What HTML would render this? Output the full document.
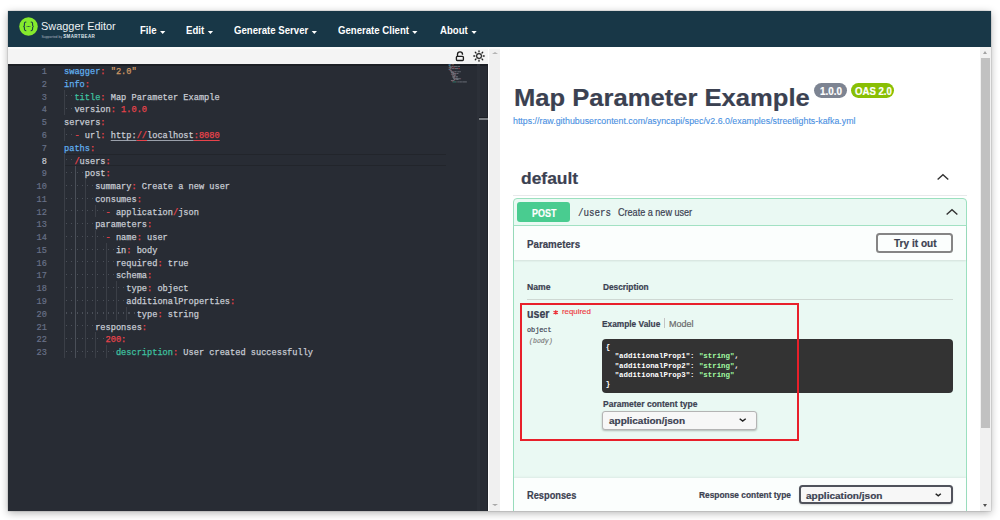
<!DOCTYPE html>
<html><head><meta charset="utf-8">
<style>
*{margin:0;padding:0;box-sizing:border-box}
html,body{width:1000px;height:520px;overflow:hidden;background:#fff;font-family:"Liberation Sans",sans-serif}
.abs{position:absolute}
#win{position:absolute;left:8px;top:11px;width:983px;height:500px;background:#fff;box-shadow:0 0 1px rgba(0,0,0,.45),0 2px 8px rgba(0,0,0,.3);overflow:hidden}
.pg{position:absolute;left:-8px;top:-11px;width:1000px;height:520px}
#hdr{position:absolute;left:0;top:0;width:983px;height:36px;background:#183747}
.menu{position:absolute;top:13px;color:#fff;font-weight:bold;font-size:11px;line-height:12px;white-space:nowrap;transform:scaleX(.873);transform-origin:0 0}
.menu i{display:inline-block;width:0;height:0;border-left:3.1px solid transparent;border-right:3.1px solid transparent;border-top:3.9px solid #fff;margin-left:4px;vertical-align:0.3px}
#tb{position:absolute;left:0;top:36px;width:492px;height:18px;background:#f4f4f4;border-top:2px solid #fafafa}
#ed{position:absolute;left:0;top:53px;width:480px;height:447px;background:#282c34;overflow:hidden}
#vstrip{position:absolute;left:480px;top:38px;width:12.6px;height:462px;background:#f0f0f0;border-left:1.5px solid #fdfdfd}
#right{position:absolute;left:492px;top:36px;width:480px;height:464px;background:#fff;overflow:hidden}
#sb{position:absolute;left:972px;top:36px;width:11px;height:464px;background:#f1f1f1}
.code{position:absolute;left:56.4px;top:2.2px;-webkit-text-stroke:0.25px currentColor;transform:scaleX(0.916);transform-origin:0 0;font-family:"Liberation Mono",monospace;font-size:9.45px;line-height:12.77px;white-space:pre;color:#c8ccd4}
.ln{position:absolute;left:0;top:2.2px;-webkit-text-stroke:0.2px currentColor;width:38.8px;text-align:right;transform:scaleX(0.876);transform-origin:100% 0;font-family:"Liberation Mono",monospace;font-size:9.8px;line-height:12.77px;color:#687188}
.ln span{display:block}
.ln .cur{color:#c8ccd4}
.dot{width:1.1px;height:1.1px;background:#4a4f58}
.k{color:#61afef}.t{color:#3fc1a0}.r{color:#e8434b}.o{color:#d19a66}.w{color:#c8ccd4}
.u{text-decoration:underline;text-underline-offset:2px;text-decoration-thickness:1px}.w.u{text-decoration-color:#9aa0aa}
.tx{position:absolute;white-space:nowrap;line-height:1;color:#3b4151;-webkit-text-stroke:.2px currentColor}
.b{font-weight:bold}
.mono{font-family:"Liberation Mono",monospace}
.chev{position:absolute}
</style></head><body>
<div id="win">
  <div id="hdr">
    <svg class="abs" style="left:10.5px;top:6px" width="19" height="19" viewBox="0 0 19 19"><circle cx="9.5" cy="9.5" r="9.3" fill="#85ea2d"/><g fill="none" stroke="#173647" stroke-width="1.05" stroke-linecap="round"><path d="M6.9 5C5.6 5 5.4 5.6 5.4 6.6V8.3C5.4 9 5 9.4 4.3 9.4C5 9.4 5.4 9.8 5.4 10.5V12.1C5.4 13.1 5.6 13.7 6.9 13.7"/><path d="M12.1 5C13.4 5 13.6 5.6 13.6 6.6V8.3C13.6 9 14 9.4 14.7 9.4C14 9.4 13.6 9.8 13.6 10.5V12.1C13.6 13.1 13.4 13.7 12.1 13.7"/></g><g fill="#173647"><circle cx="8.1" cy="9.4" r=".5"/><circle cx="9.5" cy="9.4" r=".5"/><circle cx="10.9" cy="9.4" r=".5"/></g></svg>
    <div class="pg"><div class="tx" style="left:41.40px;top:21.14px;font-size:11.172px;transform:scaleX(0.9792);transform-origin:0 0;color:#eef2f5;-webkit-text-stroke:0">Swagger Editor</div></div>
    <div class="abs" style="left:33.4px;top:22.8px;color:#aab6c0;font-size:3.5px;white-space:nowrap">Supported by <b style="font-size:4.5px;letter-spacing:0.35px;color:#dfe5ea">SMARTBEAR</b></div>
    <div class="menu" style="left:132px">File<i></i></div>
    <div class="menu" style="left:178px">Edit<i></i></div>
    <div class="menu" style="left:225.6px">Generate Server<i></i></div>
    <div class="menu" style="left:330.4px">Generate Client<i></i></div>
    <div class="menu" style="left:432.4px">About<i></i></div>
  </div>
  <div id="tb">
    <svg class="abs" style="left:447px;top:2px" width="11" height="12" viewBox="0 0 11 12"><path d="M2.5 5.4V3.3A2.5 2.5 0 0 1 7.5 3.3V3.8" fill="none" stroke="#1d1d1d" stroke-width="1.35"/><rect x="1.4" y="5.4" width="7" height="4.1" rx=".9" fill="none" stroke="#1d1d1d" stroke-width="1.35"/></svg>
    <svg class="abs" style="left:464.7px;top:1.3px" width="12" height="12" viewBox="0 0 12 12"><circle cx="6" cy="6" r="2.4" fill="none" stroke="#222" stroke-width="1.2"/><g stroke="#222" stroke-width="1.3" stroke-linecap="round"><path d="M6 .8v1M6 10.2v1M.8 6h1M10.2 6h1M2.3 2.3l.7.7M9 9l.7.7M9.7 2.3L9 3M3 9l-.7.7"/></g></svg>
  </div>
  <div id="ed">
    <div class="abs" style="left:56px;top:89.6px;width:381.5px;height:12.6px;border-top:1px solid #22252b;border-bottom:1px solid #22252b"></div>
    <div class="abs" style="left:56.20px;top:25.74px;width:1px;height:25.54px;background:#3b3f47"></div><div class="abs" style="left:56.20px;top:64.05px;width:1px;height:12.77px;background:#3b3f47"></div><div class="abs" style="left:56.20px;top:89.59px;width:1px;height:204.32px;background:#3b3f47"></div><div class="abs" style="left:66.58px;top:102.36px;width:1.6px;height:191.55px;background:#4a4f58"></div><div class="abs" style="left:76.96px;top:115.13px;width:1px;height:178.78px;background:#3b3f47"></div><div class="abs" style="left:87.34px;top:140.67px;width:1px;height:12.77px;background:#3b3f47"></div><div class="abs" style="left:87.34px;top:166.21px;width:1px;height:89.39px;background:#3b3f47"></div><div class="abs" style="left:87.34px;top:268.37px;width:1px;height:25.54px;background:#3b3f47"></div><div class="abs" style="left:97.72px;top:178.98px;width:1px;height:76.62px;background:#3b3f47"></div><div class="abs" style="left:97.72px;top:281.14px;width:1px;height:12.77px;background:#3b3f47"></div><div class="abs" style="left:108.10px;top:217.29px;width:1px;height:38.31px;background:#3b3f47"></div><div class="abs" style="left:118.48px;top:242.83px;width:1px;height:12.77px;background:#3b3f47"></div>
    <div class="abs dot" style="left:58.20px;top:31.34px"></div><div class="abs dot" style="left:63.39px;top:31.34px"></div><div class="abs dot" style="left:58.20px;top:44.11px"></div><div class="abs dot" style="left:63.39px;top:44.11px"></div><div class="abs dot" style="left:58.20px;top:69.65px"></div><div class="abs dot" style="left:63.39px;top:69.65px"></div><div class="abs dot" style="left:58.20px;top:95.19px"></div><div class="abs dot" style="left:63.39px;top:95.19px"></div><div class="abs dot" style="left:58.20px;top:107.96px"></div><div class="abs dot" style="left:63.39px;top:107.96px"></div><div class="abs dot" style="left:68.58px;top:107.96px"></div><div class="abs dot" style="left:73.77px;top:107.96px"></div><div class="abs dot" style="left:58.20px;top:120.73px"></div><div class="abs dot" style="left:63.39px;top:120.73px"></div><div class="abs dot" style="left:68.58px;top:120.73px"></div><div class="abs dot" style="left:73.77px;top:120.73px"></div><div class="abs dot" style="left:78.95px;top:120.73px"></div><div class="abs dot" style="left:84.14px;top:120.73px"></div><div class="abs dot" style="left:58.20px;top:133.50px"></div><div class="abs dot" style="left:63.39px;top:133.50px"></div><div class="abs dot" style="left:68.58px;top:133.50px"></div><div class="abs dot" style="left:73.77px;top:133.50px"></div><div class="abs dot" style="left:78.95px;top:133.50px"></div><div class="abs dot" style="left:84.14px;top:133.50px"></div><div class="abs dot" style="left:58.20px;top:146.27px"></div><div class="abs dot" style="left:63.39px;top:146.27px"></div><div class="abs dot" style="left:68.58px;top:146.27px"></div><div class="abs dot" style="left:73.77px;top:146.27px"></div><div class="abs dot" style="left:78.95px;top:146.27px"></div><div class="abs dot" style="left:84.14px;top:146.27px"></div><div class="abs dot" style="left:89.33px;top:146.27px"></div><div class="abs dot" style="left:94.53px;top:146.27px"></div><div class="abs dot" style="left:58.20px;top:159.04px"></div><div class="abs dot" style="left:63.39px;top:159.04px"></div><div class="abs dot" style="left:68.58px;top:159.04px"></div><div class="abs dot" style="left:73.77px;top:159.04px"></div><div class="abs dot" style="left:78.95px;top:159.04px"></div><div class="abs dot" style="left:84.14px;top:159.04px"></div><div class="abs dot" style="left:58.20px;top:171.81px"></div><div class="abs dot" style="left:63.39px;top:171.81px"></div><div class="abs dot" style="left:68.58px;top:171.81px"></div><div class="abs dot" style="left:73.77px;top:171.81px"></div><div class="abs dot" style="left:78.95px;top:171.81px"></div><div class="abs dot" style="left:84.14px;top:171.81px"></div><div class="abs dot" style="left:89.33px;top:171.81px"></div><div class="abs dot" style="left:94.53px;top:171.81px"></div><div class="abs dot" style="left:58.20px;top:184.58px"></div><div class="abs dot" style="left:63.39px;top:184.58px"></div><div class="abs dot" style="left:68.58px;top:184.58px"></div><div class="abs dot" style="left:73.77px;top:184.58px"></div><div class="abs dot" style="left:78.95px;top:184.58px"></div><div class="abs dot" style="left:84.14px;top:184.58px"></div><div class="abs dot" style="left:89.33px;top:184.58px"></div><div class="abs dot" style="left:94.53px;top:184.58px"></div><div class="abs dot" style="left:99.72px;top:184.58px"></div><div class="abs dot" style="left:104.91px;top:184.58px"></div><div class="abs dot" style="left:58.20px;top:197.35px"></div><div class="abs dot" style="left:63.39px;top:197.35px"></div><div class="abs dot" style="left:68.58px;top:197.35px"></div><div class="abs dot" style="left:73.77px;top:197.35px"></div><div class="abs dot" style="left:78.95px;top:197.35px"></div><div class="abs dot" style="left:84.14px;top:197.35px"></div><div class="abs dot" style="left:89.33px;top:197.35px"></div><div class="abs dot" style="left:94.53px;top:197.35px"></div><div class="abs dot" style="left:99.72px;top:197.35px"></div><div class="abs dot" style="left:104.91px;top:197.35px"></div><div class="abs dot" style="left:58.20px;top:210.12px"></div><div class="abs dot" style="left:63.39px;top:210.12px"></div><div class="abs dot" style="left:68.58px;top:210.12px"></div><div class="abs dot" style="left:73.77px;top:210.12px"></div><div class="abs dot" style="left:78.95px;top:210.12px"></div><div class="abs dot" style="left:84.14px;top:210.12px"></div><div class="abs dot" style="left:89.33px;top:210.12px"></div><div class="abs dot" style="left:94.53px;top:210.12px"></div><div class="abs dot" style="left:99.72px;top:210.12px"></div><div class="abs dot" style="left:104.91px;top:210.12px"></div><div class="abs dot" style="left:58.20px;top:222.89px"></div><div class="abs dot" style="left:63.39px;top:222.89px"></div><div class="abs dot" style="left:68.58px;top:222.89px"></div><div class="abs dot" style="left:73.77px;top:222.89px"></div><div class="abs dot" style="left:78.95px;top:222.89px"></div><div class="abs dot" style="left:84.14px;top:222.89px"></div><div class="abs dot" style="left:89.33px;top:222.89px"></div><div class="abs dot" style="left:94.53px;top:222.89px"></div><div class="abs dot" style="left:99.72px;top:222.89px"></div><div class="abs dot" style="left:104.91px;top:222.89px"></div><div class="abs dot" style="left:110.10px;top:222.89px"></div><div class="abs dot" style="left:115.29px;top:222.89px"></div><div class="abs dot" style="left:58.20px;top:235.66px"></div><div class="abs dot" style="left:63.39px;top:235.66px"></div><div class="abs dot" style="left:68.58px;top:235.66px"></div><div class="abs dot" style="left:73.77px;top:235.66px"></div><div class="abs dot" style="left:78.95px;top:235.66px"></div><div class="abs dot" style="left:84.14px;top:235.66px"></div><div class="abs dot" style="left:89.33px;top:235.66px"></div><div class="abs dot" style="left:94.53px;top:235.66px"></div><div class="abs dot" style="left:99.72px;top:235.66px"></div><div class="abs dot" style="left:104.91px;top:235.66px"></div><div class="abs dot" style="left:110.10px;top:235.66px"></div><div class="abs dot" style="left:115.29px;top:235.66px"></div><div class="abs dot" style="left:58.20px;top:248.43px"></div><div class="abs dot" style="left:63.39px;top:248.43px"></div><div class="abs dot" style="left:68.58px;top:248.43px"></div><div class="abs dot" style="left:73.77px;top:248.43px"></div><div class="abs dot" style="left:78.95px;top:248.43px"></div><div class="abs dot" style="left:84.14px;top:248.43px"></div><div class="abs dot" style="left:89.33px;top:248.43px"></div><div class="abs dot" style="left:94.53px;top:248.43px"></div><div class="abs dot" style="left:99.72px;top:248.43px"></div><div class="abs dot" style="left:104.91px;top:248.43px"></div><div class="abs dot" style="left:110.10px;top:248.43px"></div><div class="abs dot" style="left:115.29px;top:248.43px"></div><div class="abs dot" style="left:120.48px;top:248.43px"></div><div class="abs dot" style="left:125.67px;top:248.43px"></div><div class="abs dot" style="left:58.20px;top:261.20px"></div><div class="abs dot" style="left:63.39px;top:261.20px"></div><div class="abs dot" style="left:68.58px;top:261.20px"></div><div class="abs dot" style="left:73.77px;top:261.20px"></div><div class="abs dot" style="left:78.95px;top:261.20px"></div><div class="abs dot" style="left:84.14px;top:261.20px"></div><div class="abs dot" style="left:58.20px;top:273.97px"></div><div class="abs dot" style="left:63.39px;top:273.97px"></div><div class="abs dot" style="left:68.58px;top:273.97px"></div><div class="abs dot" style="left:73.77px;top:273.97px"></div><div class="abs dot" style="left:78.95px;top:273.97px"></div><div class="abs dot" style="left:84.14px;top:273.97px"></div><div class="abs dot" style="left:89.33px;top:273.97px"></div><div class="abs dot" style="left:94.53px;top:273.97px"></div><div class="abs dot" style="left:58.20px;top:286.74px"></div><div class="abs dot" style="left:63.39px;top:286.74px"></div><div class="abs dot" style="left:68.58px;top:286.74px"></div><div class="abs dot" style="left:73.77px;top:286.74px"></div><div class="abs dot" style="left:78.95px;top:286.74px"></div><div class="abs dot" style="left:84.14px;top:286.74px"></div><div class="abs dot" style="left:89.33px;top:286.74px"></div><div class="abs dot" style="left:94.53px;top:286.74px"></div><div class="abs dot" style="left:99.72px;top:286.74px"></div><div class="abs dot" style="left:104.91px;top:286.74px"></div>
    <div class="abs" style="left:0;top:0;width:480px;height:1.6px;background:#1c1f25"></div>
    <div class="abs" style="left:468.9px;top:0;width:3.5px;height:447px;background:#2c3038"></div>
    <div class="abs" style="left:479px;top:0;width:1px;height:447px;background:#20232a"></div>
    <svg class="abs" style="left:0;top:0;opacity:.65" width="480" height="40"><rect x="440.60" y="0.40" width="2.66" height="0.75" fill="#61afef"/><rect x="443.26" y="0.40" width="0.38" height="0.75" fill="#e8434b"/><rect x="444.02" y="0.40" width="1.90" height="0.75" fill="#d19a66"/><rect x="440.60" y="1.18" width="1.52" height="0.75" fill="#61afef"/><rect x="442.12" y="1.18" width="0.38" height="0.75" fill="#e8434b"/><rect x="441.36" y="1.96" width="1.90" height="0.75" fill="#3fc1a0"/><rect x="443.26" y="1.96" width="0.38" height="0.75" fill="#e8434b"/><rect x="444.02" y="1.96" width="1.14" height="0.75" fill="#aab0ba"/><rect x="445.54" y="1.96" width="3.42" height="0.75" fill="#aab0ba"/><rect x="449.34" y="1.96" width="2.66" height="0.75" fill="#aab0ba"/><rect x="441.36" y="2.74" width="2.66" height="0.75" fill="#aab0ba"/><rect x="444.02" y="2.74" width="0.38" height="0.75" fill="#e8434b"/><rect x="444.78" y="2.74" width="1.90" height="0.75" fill="#e8434b"/><rect x="440.60" y="3.52" width="2.66" height="0.75" fill="#aab0ba"/><rect x="443.26" y="3.52" width="0.38" height="0.75" fill="#e8434b"/><rect x="441.36" y="4.30" width="0.38" height="0.75" fill="#e8434b"/><rect x="442.12" y="4.30" width="1.14" height="0.75" fill="#aab0ba"/><rect x="443.26" y="4.30" width="0.38" height="0.75" fill="#e8434b"/><rect x="444.02" y="4.30" width="1.90" height="0.75" fill="#aab0ba"/><rect x="445.92" y="4.30" width="0.76" height="0.75" fill="#e8434b"/><rect x="446.68" y="4.30" width="3.42" height="0.75" fill="#aab0ba"/><rect x="450.10" y="4.30" width="1.90" height="0.75" fill="#e8434b"/><rect x="440.60" y="5.08" width="1.90" height="0.75" fill="#61afef"/><rect x="442.50" y="5.08" width="0.38" height="0.75" fill="#e8434b"/><rect x="441.36" y="5.86" width="0.38" height="0.75" fill="#e8434b"/><rect x="441.74" y="5.86" width="1.90" height="0.75" fill="#aab0ba"/><rect x="443.64" y="5.86" width="0.38" height="0.75" fill="#e8434b"/><rect x="442.12" y="6.64" width="1.52" height="0.75" fill="#aab0ba"/><rect x="443.64" y="6.64" width="0.38" height="0.75" fill="#e8434b"/><rect x="442.88" y="7.42" width="2.66" height="0.75" fill="#aab0ba"/><rect x="445.54" y="7.42" width="0.38" height="0.75" fill="#e8434b"/><rect x="446.30" y="7.42" width="2.28" height="0.75" fill="#aab0ba"/><rect x="448.96" y="7.42" width="0.38" height="0.75" fill="#aab0ba"/><rect x="449.72" y="7.42" width="1.14" height="0.75" fill="#aab0ba"/><rect x="451.24" y="7.42" width="1.52" height="0.75" fill="#aab0ba"/><rect x="442.88" y="8.20" width="3.04" height="0.75" fill="#aab0ba"/><rect x="445.92" y="8.20" width="0.38" height="0.75" fill="#e8434b"/><rect x="443.64" y="8.98" width="0.38" height="0.75" fill="#e8434b"/><rect x="444.40" y="8.98" width="4.18" height="0.75" fill="#aab0ba"/><rect x="448.58" y="8.98" width="0.38" height="0.75" fill="#e8434b"/><rect x="448.96" y="8.98" width="1.52" height="0.75" fill="#aab0ba"/><rect x="442.88" y="9.76" width="3.80" height="0.75" fill="#aab0ba"/><rect x="446.68" y="9.76" width="0.38" height="0.75" fill="#e8434b"/><rect x="443.64" y="10.54" width="0.38" height="0.75" fill="#e8434b"/><rect x="444.40" y="10.54" width="1.52" height="0.75" fill="#aab0ba"/><rect x="445.92" y="10.54" width="0.38" height="0.75" fill="#e8434b"/><rect x="446.68" y="10.54" width="1.52" height="0.75" fill="#aab0ba"/><rect x="444.40" y="11.32" width="0.76" height="0.75" fill="#aab0ba"/><rect x="445.16" y="11.32" width="0.38" height="0.75" fill="#e8434b"/><rect x="445.92" y="11.32" width="1.52" height="0.75" fill="#aab0ba"/><rect x="444.40" y="12.10" width="3.04" height="0.75" fill="#aab0ba"/><rect x="447.44" y="12.10" width="0.38" height="0.75" fill="#e8434b"/><rect x="448.20" y="12.10" width="1.52" height="0.75" fill="#aab0ba"/><rect x="444.40" y="12.88" width="2.28" height="0.75" fill="#aab0ba"/><rect x="446.68" y="12.88" width="0.38" height="0.75" fill="#e8434b"/><rect x="445.16" y="13.66" width="1.52" height="0.75" fill="#aab0ba"/><rect x="446.68" y="13.66" width="0.38" height="0.75" fill="#e8434b"/><rect x="447.44" y="13.66" width="2.28" height="0.75" fill="#aab0ba"/><rect x="445.16" y="14.44" width="7.60" height="0.75" fill="#aab0ba"/><rect x="452.76" y="14.44" width="0.38" height="0.75" fill="#e8434b"/><rect x="445.92" y="15.22" width="1.52" height="0.75" fill="#aab0ba"/><rect x="447.44" y="15.22" width="0.38" height="0.75" fill="#e8434b"/><rect x="448.20" y="15.22" width="2.28" height="0.75" fill="#aab0ba"/><rect x="442.88" y="16.00" width="3.42" height="0.75" fill="#aab0ba"/><rect x="446.30" y="16.00" width="0.38" height="0.75" fill="#e8434b"/><rect x="443.64" y="16.78" width="1.14" height="0.75" fill="#e8434b"/><rect x="444.78" y="16.78" width="0.38" height="0.75" fill="#e8434b"/><rect x="444.40" y="17.56" width="4.18" height="0.75" fill="#3fc1a0"/><rect x="448.58" y="17.56" width="0.38" height="0.75" fill="#e8434b"/><rect x="449.34" y="17.56" width="1.52" height="0.75" fill="#aab0ba"/><rect x="451.24" y="17.56" width="2.66" height="0.75" fill="#aab0ba"/><rect x="454.28" y="17.56" width="4.56" height="0.75" fill="#aab0ba"/></svg>
    <div class="abs" style="left:470.9px;top:53px;width:9px;height:1px;background:#1c1f25"></div>
    <div class="abs" style="left:470.9px;top:54px;width:9px;height:2.3px;background:#7b7f84"></div>
    <div class="ln"><span>1</span><span>2</span><span>3</span><span>4</span><span>5</span><span>6</span><span>7</span><span class=cur>8</span><span>9</span><span>10</span><span>11</span><span>12</span><span>13</span><span>14</span><span>15</span><span>16</span><span>17</span><span>18</span><span>19</span><span>20</span><span>21</span><span>22</span><span>23</span></div>
    <div class="code"><span class="k">swagger</span><span class="r">:</span><span class="w"> </span><span class="o">&quot;2.0&quot;</span>
<span class="k">info</span><span class="r">:</span>
  <span class="t">title</span><span class="r">:</span><span class="w"> Map Parameter Example</span>
  <span class="w">version</span><span class="r">:</span><span class="w"> </span><span class="r">1.0.0</span>
<span class="w">servers</span><span class="r">:</span>
  <span class="r">-</span><span class="w"> url</span><span class="r">:</span><span class="w"> </span><span class="w u">http:</span><span class="r u">//</span><span class="w u">localhost</span><span class="r u">:8080</span>
<span class="k">paths</span><span class="r">:</span>
  <span class="r">/</span><span class="w">users</span><span class="r">:</span>
    <span class="w">post</span><span class="r">:</span>
      <span class="w">summary</span><span class="r">:</span><span class="w"> Create a new user</span>
      <span class="w">consumes</span><span class="r">:</span>
        <span class="r">-</span><span class="w"> application</span><span class="r">/</span><span class="w">json</span>
      <span class="w">parameters</span><span class="r">:</span>
        <span class="r">-</span><span class="w"> name</span><span class="r">:</span><span class="w"> user</span>
          <span class="w">in</span><span class="r">:</span><span class="w"> body</span>
          <span class="w">required</span><span class="r">:</span><span class="w"> true</span>
          <span class="w">schema</span><span class="r">:</span>
            <span class="w">type</span><span class="r">:</span><span class="w"> object</span>
            <span class="w">additionalProperties</span><span class="r">:</span>
              <span class="w">type</span><span class="r">:</span><span class="w"> string</span>
      <span class="w">responses</span><span class="r">:</span>
        <span class="r">200</span><span class="r">:</span>
          <span class="t">description</span><span class="r">:</span><span class="w"> User created successfully</span></div>
  </div>
  <div id="vstrip">
    <div class="abs" style="left:2.8px;top:2.6px;width:0;height:0;border-left:3px solid transparent;border-right:3px solid transparent;border-bottom:2.6px solid #b4b4b4"></div>
    <div class="abs" style="left:2.8px;top:455px;width:0;height:0;border-left:3px solid transparent;border-right:3px solid transparent;border-top:2.6px solid #a8a8a8"></div>
  </div>
  <div id="right"></div>
  <div class="pg">
<div class="tx" style="left:513.80px;top:85.60px;font-size:24.690px;transform:scaleX(1.0363);transform-origin:0 0;font-weight:bold;color:#3b4151;">Map Parameter Example</div>
<div class="abs" style="left:814.40px;top:83.20px;width:33.10px;height:14.80px;border-radius:7.4px;background:#7d8492"></div>
<div class="tx" style="left:820.40px;top:86.22px;font-size:10.602px;transform:scaleX(0.9331);transform-origin:0 0;font-weight:bold;color:#fff;">1.0.0</div>
<div class="abs" style="left:851.20px;top:83.20px;width:42.70px;height:14.80px;border-radius:7.4px;background:#89bf04"></div>
<div class="tx" style="left:854.60px;top:86.22px;font-size:10.602px;transform:scaleX(0.9076);transform-origin:0 0;font-weight:bold;color:#fff;">OAS 2.0</div>
<div class="tx" style="left:512.80px;top:116.74px;font-size:8.690px;transform:scaleX(1.0180);transform-origin:0 0;color:#4990e2;-webkit-text-stroke:.1px currentColor;">https://raw.githubusercontent.com/asyncapi/spec/v2.6.0/examples/streetlights-kafka.yml</div>
<div class="tx" style="left:520.50px;top:169.88px;font-size:17.379px;transform:scaleX(1.0040);transform-origin:0 0;font-weight:bold;color:#3b4151;">default</div>
<svg class="abs" style="left:934.70px;top:172.00px" width="15.90" height="10.20"><path d="M2.63 7.50L7.95 2.77L13.27 7.50" fill="none" stroke="#333" stroke-width="1.4"/></svg>
<div class="abs" style="left:513.40px;top:195.00px;width:453.30px;height:1.00px;background:#e8e9eb"></div>
<div class="abs" style="left:513.40px;top:198.10px;width:453.30px;height:341.90px;border:1px solid #9be0bf;border-radius:4px;background:#eaf9f3"></div>
<div class="abs" style="left:514.40px;top:225.20px;width:451.30px;height:1.00px;background:#a3e2c4"></div>
<div class="abs" style="left:517.10px;top:202.40px;width:53.20px;height:19.80px;border-radius:3px;background:#49cc90"></div>
<div class="tx" style="left:531.50px;top:207.80px;font-size:10.745px;transform:scaleX(0.8339);transform-origin:0 0;font-weight:bold;color:#fff;">POST</div>
<div class="tx" style="left:577.70px;top:209.49px;font-size:10.069px;transform:scaleX(0.9129);transform-origin:0 0;font-family:'Liberation Mono',monospace;color:#3b4151;">/users</div>
<div class="tx" style="left:617.70px;top:208.09px;font-size:10.172px;transform:scaleX(0.8927);transform-origin:0 0;color:#3b4151;">Create a new user</div>
<svg class="abs" style="left:944.30px;top:206.60px" width="16.00" height="10.20"><path d="M2.63 7.50L8.00 2.77L13.37 7.50" fill="none" stroke="#333" stroke-width="1.4"/></svg>
<div class="abs" style="left:514.40px;top:226.00px;width:451.30px;height:34.00px;background:rgba(255,255,255,.8);box-shadow:0 1px 2px rgba(0,0,0,.1)"></div>
<div class="tx" style="left:527.30px;top:238.89px;font-size:10.756px;transform:scaleX(0.9062);transform-origin:0 0;font-weight:bold;color:#3b4151;">Parameters</div>
<div class="abs" style="left:876.00px;top:233.00px;width:77.00px;height:20.00px;border:2px solid #858585;border-radius:3.5px"></div>
<div class="tx" style="left:893.60px;top:238.72px;font-size:10.483px;transform:scaleX(0.9625);transform-origin:0 0;font-weight:bold;color:#3b4151;">Try it out</div>
<div class="tx" style="left:527.30px;top:283.04px;font-size:8.576px;transform:scaleX(1.0060);transform-origin:0 0;font-weight:bold;color:#3b4151;">Name</div>
<div class="tx" style="left:602.50px;top:282.93px;font-size:8.828px;transform:scaleX(0.9411);transform-origin:0 0;font-weight:bold;color:#3b4151;">Description</div>
<div class="abs" style="left:527.00px;top:299.20px;width:425.70px;height:1.00px;background:#cfd8d3"></div>
<div class="tx" style="left:527.10px;top:308.65px;font-size:11.874px;transform:scaleX(0.8972);transform-origin:0 0;font-weight:bold;color:#3b4151;">user</div>
<svg class="abs" style="left:553.2px;top:310.2px" width="5.4" height="4.8" viewBox="0 0 5.4 4.8"><g stroke="#ec2f36" stroke-width="1.25"><path d="M2.7 .2V4.6M.5 1.2L4.9 3.6M.5 3.6L4.9 1.2"/></g></svg>
<div class="tx" style="left:561.70px;top:308.43px;font-size:8.000px;transform:scaleX(0.9812);transform-origin:0 0;color:#ee3a40;-webkit-text-stroke:.15px #ee3a40;">required</div>
<div class="tx" style="left:527.10px;top:327.01px;font-size:7.172px;transform:scaleX(0.9525);transform-origin:0 0;font-family:'Liberation Mono',monospace;color:#3b4151;">object</div>
<div class="tx" style="left:528.80px;top:338.00px;font-size:7.395px;transform:scaleX(0.8899);transform-origin:0 0;font-style:italic;font-family:'Liberation Mono',monospace;color:#808080;">(body)</div>
<div class="tx" style="left:602.40px;top:319.53px;font-size:8.828px;transform:scaleX(0.9445);transform-origin:0 0;font-weight:bold;color:#3b4151;">Example Value</div>
<div class="abs" style="left:664.20px;top:318.20px;width:1.00px;height:9.60px;background:#c4c4c4"></div>
<div class="tx" style="left:668.80px;top:319.53px;font-size:8.828px;transform:scaleX(1.0230);transform-origin:0 0;color:#6b6b6b;">Model</div>
<div class="abs" style="left:602.20px;top:339.00px;width:350.40px;height:54.00px;border-radius:4px;background:#333"></div>
<div class="tx mono b" style="left:605.8px;top:343.2px;font-size:7.4px;line-height:9.25px;color:#fff;white-space:pre;-webkit-text-stroke:0">{
  "additionalProp1": <span style="color:#a2fca2">"string"</span>,
  "additionalProp2": <span style="color:#a2fca2">"string"</span>,
  "additionalProp3": <span style="color:#a2fca2">"string"</span>
}</div>
<div class="tx" style="left:602.70px;top:399.28px;font-size:9.593px;transform:scaleX(0.8872);transform-origin:0 0;font-weight:bold;color:#3b4151;">Parameter content type</div>
<div class="abs" style="left:602.00px;top:411.00px;width:154.70px;height:19.00px;border:1px solid #b4b4b4;border-radius:3px;background:#f7f7f7;box-shadow:0 1px 2px rgba(0,0,0,.25)"></div>
<div class="tx" style="left:609.30px;top:415.79px;font-size:9.931px;transform:scaleX(1.0067);transform-origin:0 0;font-weight:bold;color:#3b4151;">application/json</div>
<svg class="abs" style="left:737.00px;top:416.20px" width="11.40" height="7.80"><path d="M2.67 2.75L5.70 4.98L8.72 2.75" fill="none" stroke="#222" stroke-width="1.5"/></svg>
<div class="abs" style="left:520.00px;top:303.00px;width:279.00px;height:138.00px;border:2px solid #e8202a"></div>
<div class="abs" style="left:514.40px;top:477.80px;width:451.30px;height:42.20px;background:rgba(255,255,255,.8);box-shadow:0 -1px 2px rgba(0,0,0,.06)"></div>
<div class="tx" style="left:527.30px;top:489.89px;font-size:10.756px;transform:scaleX(0.8609);transform-origin:0 0;font-weight:bold;color:#3b4151;">Responses</div>
<div class="tx" style="left:699.40px;top:491.32px;font-size:8.721px;transform:scaleX(0.9589);transform-origin:0 0;font-weight:bold;color:#3b4151;">Response content type</div>
<div class="abs" style="left:798.70px;top:484.80px;width:154.00px;height:19.60px;border:2px solid #50535c;border-radius:3.5px;background:#f7f7f7;box-shadow:0 1px 2px rgba(0,0,0,.15)"></div>
<div class="tx" style="left:806.30px;top:490.89px;font-size:9.931px;transform:scaleX(1.0120);transform-origin:0 0;font-weight:bold;color:#3b4151;">application/json</div>
<svg class="abs" style="left:933.20px;top:491.00px" width="10.50" height="7.70"><path d="M2.67 2.75L5.25 4.87L7.83 2.75" fill="none" stroke="#222" stroke-width="1.5"/></svg>
  </div>
  <div id="sb">
    <div class="abs" style="left:3px;top:4px;width:0;height:0;border-left:2.5px solid transparent;border-right:2.5px solid transparent;border-bottom:3px solid #a3a3a3"></div>
    <div class="abs" style="left:1px;top:11px;width:9px;height:370px;background:#c1c1c1"></div>
    <div class="abs" style="left:3px;top:457px;width:0;height:0;border-left:2.5px solid transparent;border-right:2.5px solid transparent;border-top:3px solid #505050"></div>
  </div>
</div>
</body></html>
